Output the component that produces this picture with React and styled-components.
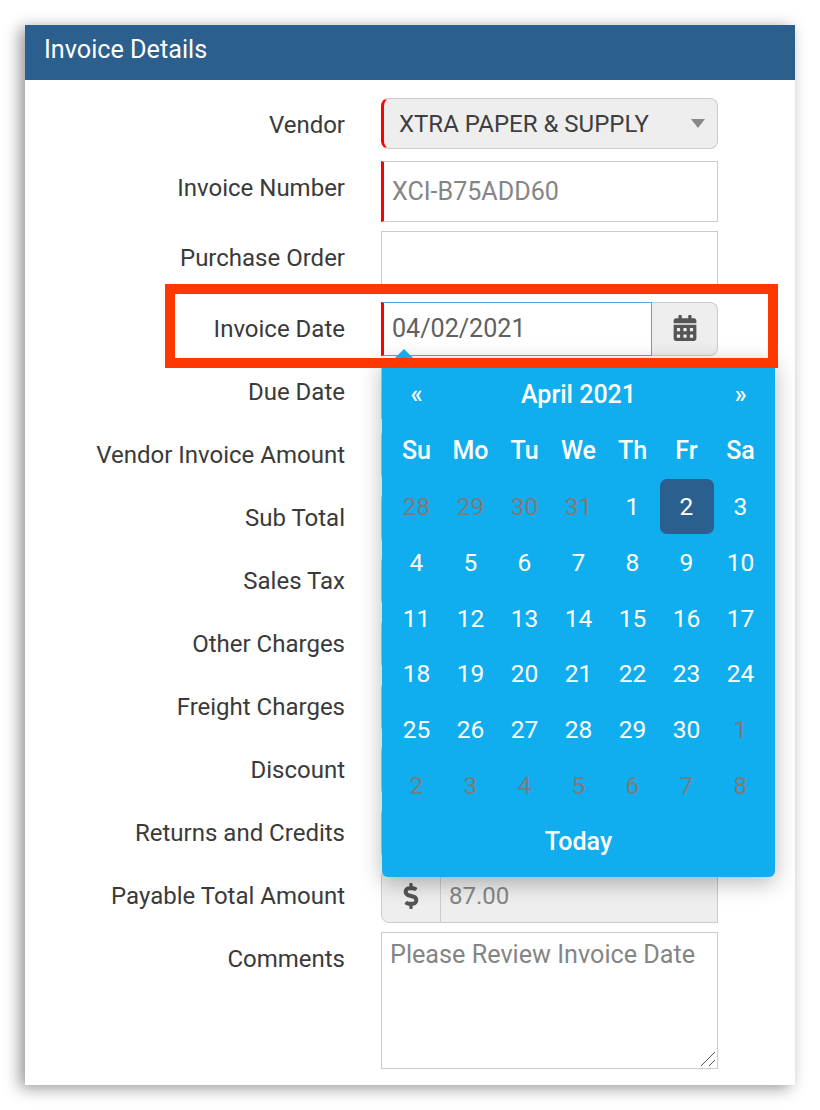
import React from "react";
import styled, { createGlobalStyle } from "styled-components";
import { FaCalendarAlt, FaDollarSign } from "react-icons/fa";

const GlobalStyle = createGlobalStyle`
  html, body {
    margin: 0;
    padding: 0;
    background: #fff;
  }
  body {
    font-family: Roboto, "Liberation Sans", sans-serif;
    color: #3a3a3a;
  }
`;

const Page = styled.div`
  box-sizing: border-box;
  width: 820px;
  height: 1110px;
  padding: 25px 0 0 25px;
  overflow: hidden;
`;

const Card = styled.div`
  position: relative;
  width: 770px;
  height: 1060px;
  background: #fff;
  box-shadow: -5px 3px 15px rgba(0, 0, 0, 0.42);
`;

const CardHeader = styled.div`
  display: flex;
  align-items: center;
  height: 55px;
  padding: 0 19px 6px;
  box-sizing: border-box;
  background: #2a5f8e;
  color: #fff;
  font-size: 25.2px;
`;

const Form = styled.div`
  padding-top: 18px;
`;

const Row = styled.div`
  display: grid;
  grid-template-columns: 320px 337px;
  column-gap: 36px;
  align-items: start;
  margin-bottom: 9px;
`;

const Label = styled.div`
  text-align: right;
  font-size: 24px;
  line-height: 54px;
  color: #3a3a3a;
`;

const Field = styled.div`
  position: relative;
  display: flex;
  align-items: center;
  box-sizing: border-box;
  height: ${(p) => p.$h || 54}px;
  padding-left: 8px;
  background: ${(p) => (p.$disabled ? "#eeeeee" : "#fff")};
  border: 1px solid #cccccc;
  border-left: ${(p) => (p.$required ? "3px solid #ff0000" : "1px solid #cccccc")};
  font-size: 25.1px;
  color: #858585;
`;

const SelectBox = styled(Field)`
  padding: 0 12px 0 15px;
  justify-content: space-between;
  background: #eeeeee;
  border-radius: 8px;
  font-size: 24px;
  color: #3e3e3e;
`;

const Caret = styled.span`
  width: 0;
  height: 0;
  border-left: 7.5px solid transparent;
  border-right: 7.5px solid transparent;
  border-top: 9px solid #888;
`;

const InputGroup = styled.div`
  display: flex;
  height: 54px;
`;

const DateInput = styled(Field)`
  flex: 1;
  padding-bottom: 2px;
  border: 1px solid #5aa5e0;
  border-left: 3px solid #ff0000;
  color: #606060;
`;

const AddonRight = styled.div`
  display: flex;
  align-items: center;
  justify-content: center;
  box-sizing: border-box;
  width: 66px;
  padding-bottom: 2px;
  background: #eeeeee;
  border: 1px solid #cccccc;
  border-left: none;
  border-radius: 0 8px 8px 0;
  color: #555;
  font-size: 26px;
`;

const AddonLeft = styled.div`
  display: flex;
  align-items: center;
  justify-content: center;
  flex: none;
  box-sizing: border-box;
  width: 60px;
  background: #eeeeee;
  border: 1px solid #cccccc;
  border-radius: 8px 0 0 8px;
  color: #555;
  font-size: 26px;
`;

const AmountInput = styled(Field)`
  flex: 1;
  border-left: none;
  font-size: 24px;
`;

const TextArea = styled(Field)`
  align-items: flex-start;
  height: 137px;
  padding: 7px 8px;
  line-height: 30px;
  font-size: 25.2px;
`;

const Grip = styled.svg`
  position: absolute;
  right: 1px;
  bottom: 1px;
  width: 16px;
  height: 16px;
`;

const Calendar = styled.div`
  position: absolute;
  z-index: 2;
  left: 357px;
  top: 333px;
  width: 393px;
  height: 519px;
  box-sizing: border-box;
  padding: 9px 8px 8px;
  background: #10aeef;
  border-radius: 0 0 6px 6px;
  box-shadow: 0 6px 22px rgba(0, 0, 0, 0.28);
  color: #fff;
`;

const Pointer = styled.span`
  position: absolute;
  left: 13px;
  top: -9px;
  width: 0;
  height: 0;
  border-left: 9px solid transparent;
  border-right: 9px solid transparent;
  border-bottom: 9px solid #10aeef;
`;

const CalGrid = styled.div`
  display: grid;
  grid-template-columns: repeat(7, 54px);
  grid-auto-rows: 55.8px;
  margin-left: -0.5px;
`;

const Cell = styled.div`
  display: flex;
  align-items: center;
  justify-content: center;
  font-size: ${(p) => (p.$head ? 25 : 24.5)}px;
  font-weight: ${(p) => (p.$head ? 500 : 400)};
  color: ${(p) => (p.$muted ? "#7d7a7a" : "#fff")};
  background: ${(p) => (p.$active ? "#2a5f8e" : "transparent")};
  border-radius: ${(p) => (p.$active ? "7px" : "0")};
`;

const MonthTitle = styled(Cell)`
  grid-column: span 5;
`;

const TodayCell = styled(Cell)`
  grid-column: span 7;
`;

const Highlight = styled.div`
  position: absolute;
  z-index: 3;
  left: 140px;
  top: 259px;
  width: 613px;
  height: 84px;
  box-sizing: border-box;
  border: 10px solid #ff3700;
  pointer-events: none;
`;

const days = [
  [28, 29, 30, 31, 1, 2, 3],
  [4, 5, 6, 7, 8, 9, 10],
  [11, 12, 13, 14, 15, 16, 17],
  [18, 19, 20, 21, 22, 23, 24],
  [25, 26, 27, 28, 29, 30, 1],
  [2, 3, 4, 5, 6, 7, 8],
];

const isMuted = (weekIndex, day) =>
  (weekIndex === 0 && day > 20) || (weekIndex >= 4 && day < 20);

const moneyRows = [
  { label: "Vendor Invoice Amount" },
  { label: "Sub Total" },
  { label: "Sales Tax" },
  { label: "Other Charges" },
  { label: "Freight Charges" },
  { label: "Discount" },
  { label: "Returns and Credits" },
  { label: "Payable Total Amount", value: "87.00" },
];

const App = () => {
  return (
    <Page>
      <GlobalStyle />
      <Card>
        <CardHeader>Invoice Details</CardHeader>
        <Form>
          <Row>
            <Label>Vendor</Label>
            <SelectBox $h={51} $required>
              XTRA PAPER &amp; SUPPLY
              <Caret />
            </SelectBox>
          </Row>
          <Row>
            <Label>Invoice Number</Label>
            <Field $h={61} $required>XCI-B75ADD60</Field>
          </Row>
          <Row>
            <Label>Purchase Order</Label>
            <Field $h={62} />
          </Row>
          <Row>
            <Label>Invoice Date</Label>
            <InputGroup>
              <DateInput $required>04/02/2021</DateInput>
              <AddonRight>
                <FaCalendarAlt />
              </AddonRight>
            </InputGroup>
          </Row>
          <Row>
            <Label>Due Date</Label>
            <Field />
          </Row>
          {moneyRows.map((row) => (
            <Row key={row.label}>
              <Label>{row.label}</Label>
              <InputGroup>
                <AddonLeft>
                  <FaDollarSign />
                </AddonLeft>
                <AmountInput $disabled>{row.value}</AmountInput>
              </InputGroup>
            </Row>
          ))}
          <Row>
            <Label>Comments</Label>
            <TextArea>
              Please Review Invoice Date
              <Grip viewBox="0 0 16 16">
                <path d="M1 15 L15 1 M9 15 L15 9" stroke="#555" strokeWidth="1" fill="none" />
              </Grip>
            </TextArea>
          </Row>
        </Form>

        <Calendar>
          <Pointer />
          <CalGrid>
            <Cell $head>«</Cell>
            <MonthTitle $head>April 2021</MonthTitle>
            <Cell $head>»</Cell>
            {["Su", "Mo", "Tu", "We", "Th", "Fr", "Sa"].map((d) => (
              <Cell key={d} $head>{d}</Cell>
            ))}
            {days.map((week, w) =>
              week.map((day, i) => (
                <Cell
                  key={`${w}-${i}`}
                  $muted={isMuted(w, day)}
                  $active={w === 0 && day === 2}
                >
                  {day}
                </Cell>
              ))
            )}
            <TodayCell $head>Today</TodayCell>
          </CalGrid>
        </Calendar>

        <Highlight />
      </Card>
    </Page>
  );
};

export default App;
